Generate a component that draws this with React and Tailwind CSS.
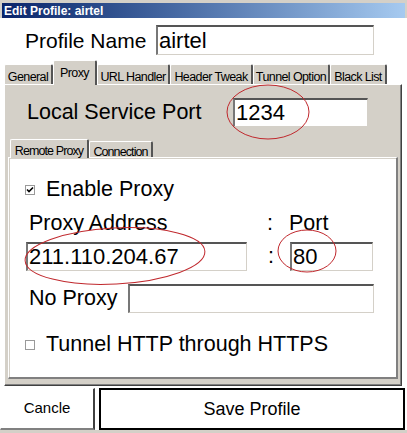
import React from 'react'

const font = { fontFamily: '"Liberation Sans", Arial, sans-serif' }

function Field({ value, className }) {
  return (
    <div
      className={`h-[29px] bg-white border-t-2 border-l-2 border-t-[#555] border-l-[#777] border-r border-b border-r-[#d4d0c8] border-b-[#d4d0c8] flex items-center pl-[1px] text-[22px] text-black leading-none ${className}`}
    >
      {value}
    </div>
  )
}

function Check({ checked }) {
  return (
    <span className="w-[10px] h-[10px] border border-[#9a9a9a] bg-white flex items-center justify-center">
      {checked && (
        <svg width="8" height="8" viewBox="0 0 8 8">
          <path d="M1 3.5 L3 5.5 L7 1.5" fill="none" stroke="#000" strokeWidth="1.6" />
        </svg>
      )}
    </span>
  )
}

function Tab({ label, w, selected }) {
  if (selected) {
    return (
      <div
        className={`relative z-10 -mb-[1px] h-[25px] ${w} bg-[#d4d0c8] border-l border-t border-white border-r-2 border-r-[#555] rounded-t-[2px] flex justify-center pt-[3px] text-[12.5px] tracking-[-0.6px] text-black`}
      >
        {label}
      </div>
    )
  }
  return (
    <div
      className={`h-[20px] ${w} bg-[#d4d0c8] border-l border-t border-white border-r-2 border-r-[#555] rounded-t-[2px] flex justify-center pt-[3px] text-[12.5px] tracking-[-0.6px] text-black`}
    >
      {label}
    </div>
  )
}

export default function App() {
  const tabs = [
    { label: 'General', w: 'w-[49px]' },
    { label: 'Proxy', w: 'w-[44px]', selected: true },
    { label: 'URL Handler', w: 'w-[73px]' },
    { label: 'Header Tweak', w: 'w-[83px]' },
    { label: 'Tunnel Option', w: 'w-[77px]' },
    { label: 'Black List', w: 'w-[57px]' },
  ]

  return (
    <div className="relative w-[407px] h-[433px] overflow-hidden bg-[#d4d0c8] pt-[3px] flex flex-col" style={font}>
      {/* title */}
      <div className="mx-[2px] h-[15px] bg-gradient-to-r from-[#0a246a] to-[#a6caf0] flex items-center pl-[2px] text-white text-[12px] font-bold leading-none">
        Edit Profile: airtel
      </div>

      <div className="flex-1 bg-white flex flex-col">
        {/* profile name */}
        <div className="h-[43px] flex items-start pt-[7px]">
          <span className="ml-[25px] mt-[5px] w-[131px] text-[21px] leading-none text-black">Profile Name</span>
          <Field value="airtel" className="w-[218px] h-[30px]" />
        </div>

        {/* outer tabs */}
        <div className="flex items-end ml-[4px] h-[23px]">
          {tabs.map((t) => (
            <Tab key={t.label} {...t} />
          ))}
        </div>

        <div className="ml-[4px] w-[398px] h-[302px] bg-[#d4d0c8] border-l border-t border-white border-r border-b border-r-[#404040] border-b-[#404040] shadow-[inset_-1px_-1px_0_#808080] flex flex-col">
          <div className="flex items-center mt-[13px] h-[29px]">
            <span className="ml-[22px] w-[206px] text-[21.5px] leading-none text-black">Local Service Port</span>
            <Field value="1234" className="w-[135px]" />
          </div>

          {/* inner tabs */}
          <div className="flex items-end ml-[5px] mt-[13px] h-[17px]">
            <div className="relative z-10 -mb-[1px] h-[19px] w-[79px] bg-[#d4d0c8] border-l border-t border-white border-r-2 border-r-[#555] rounded-t-[2px] flex justify-center pt-[2px] text-[12.5px] tracking-[-0.9px] text-black">
              Remote Proxy
            </div>
            <div className="h-[16px] w-[64px] bg-[#d4d0c8] border-l border-t border-white border-r-2 border-r-[#555] rounded-t-[2px] flex justify-center pt-[1px] text-[12.5px] tracking-[-0.9px] text-black">
              Connection
            </div>
          </div>

          <div className="ml-[3px] w-[390px] h-[222px] bg-white border-l border-t border-white border-r-2 border-b-2 border-r-[#808080] border-b-[#808080] shadow-[inset_1px_1px_0_#d4d0c8] flex flex-col text-black">
            <div className="flex items-center mt-[20px] h-[24px]">
              <span className="ml-[16px]"><Check checked /></span>
              <span className="ml-[11px] text-[21.5px] leading-none">Enable Proxy</span>
            </div>

            <div className="flex items-center mt-[10px] h-[24px] text-[21.5px] leading-none">
              <span className="ml-[20px] w-[238px]">Proxy Address</span>
              <span className="w-[22px]">:</span>
              <span>Port</span>
            </div>

            <div className="flex items-center mt-[6px] h-[29px]">
              <Field value="211.110.204.67" className="ml-[17px] w-[221px]" />
              <span className="ml-[21px] w-[22px] text-[21.5px] leading-none">:</span>
              <Field value="80" className="w-[83px]" />
            </div>

            <div className="flex items-center mt-[13px] h-[29px]">
              <span className="ml-[20px] w-[99px] text-[21.5px] leading-none">No Proxy</span>
              <Field value="" className="w-[246px]" />
            </div>

            <div className="flex items-center mt-[20px] h-[24px]">
              <span className="ml-[16px]"><Check /></span>
              <span className="ml-[11px] text-[21.5px] leading-none">Tunnel HTTP through HTTPS</span>
            </div>
          </div>
        </div>

        {/* buttons */}
        <div className="flex mt-[2px] h-[42px]">
          <button className="w-[95px] h-full bg-white border-l border-t border-white border-r-2 border-b-2 border-r-[#404040] border-b-[#808080] text-[15px] text-black">
            Cancle
          </button>
          <button className="ml-[4px] w-[306px] h-full bg-white border-2 border-black text-[18px] text-black">
            Save Profile
          </button>
        </div>
        <div className="h-[3px] bg-[#d4d0c8]" />
      </div>

      {/* red marker ellipses drawn over the screenshot */}
      <svg className="absolute left-0 top-0 pointer-events-none" width="407" height="433">
        <ellipse cx="268" cy="112" rx="41" ry="27" fill="none" stroke="#c0282d" strokeWidth="1" />
        <ellipse cx="115" cy="256" rx="90" ry="28" fill="none" stroke="#c0282d" strokeWidth="1" transform="rotate(-3 115 256)" />
        <ellipse cx="307" cy="251" rx="29" ry="21" fill="none" stroke="#c0282d" strokeWidth="1" />
      </svg>
    </div>
  )
}
